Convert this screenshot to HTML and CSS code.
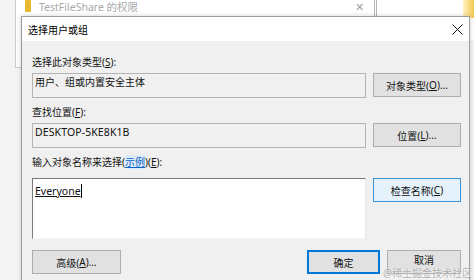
FILE: index.html
```html
<!DOCTYPE html>
<html lang="zh-CN">
<head>
<meta charset="utf-8">
<title>选择用户或组</title>
<link rel="stylesheet" href="styles.css">
</head>
<body>
<div class="desktop">
  <div class="win-right"></div>
  <div class="yellow"></div>
  <div class="behind">
    <div class="behind-title">
      <span class="folder"></span>
      <span class="behind-text">TestFileShare 的权限</span>
      <span class="behind-x">✕</span>
    </div>
  </div>

  <div class="dialog">
    <div class="titlebar">
      <span class="title">选择用户或组</span>
      <svg class="close" width="11" height="11" viewBox="0 0 11 11"><path d="M0.5 0.5 L10.5 10.5 M10.5 0.5 L0.5 10.5" stroke="#111" stroke-width="1"/></svg>
    </div>
    <div class="content">
      <div class="label">选择此对象类型(<u>S</u>):</div>
      <div class="row">
        <div class="box">用户、组或内置安全主体</div>
        <div class="btn">对象类型(<u>O</u>)...</div>
      </div>
      <div class="label l2">查找位置(<u>F</u>):</div>
      <div class="row">
        <div class="box latin">DESKTOP-5KE8K1B</div>
        <div class="btn">位置(<u>L</u>)...</div>
      </div>
      <div class="label l2">输入对象名称来选择(<span class="link">示例</span>)(<u>E</u>):</div>
      <div class="row">
        <div class="textarea"><span class="entry">Everyone</span><span class="caret"></span></div>
        <div class="btn hover">检查名称(<u>C</u>)</div>
      </div>
      <div class="footer">
        <div class="btn adv">高级(<u>A</u>)...</div>
        <div class="actions">
          <div class="btn ok">确定</div>
          <div class="btn cancel">取消</div>
        </div>
      </div>
    </div>
  </div>

  <div class="watermark">@稀土掘金技术社区</div>
</div>
</body>
</html>
```

FILE: styles.css
```css
html, body {
  margin: 0;
  padding: 0;
}
body {
  width: 474px;
  height: 280px;
  overflow: hidden;
  background: #f4f4f4;
  font-family: "Noto Sans", "Noto Sans CJK SC", sans-serif;
  font-size: 10px;
  color: #111;
}
.desktop {
  position: relative;
  width: 474px;
  height: 280px;
  overflow: hidden;
}
.win-right {
  position: absolute;
  left: 377px;
  top: 0;
  width: 97px;
  height: 40px;
  background: #fff;
}
.yellow {
  position: absolute;
  left: 463px;
  top: 0;
  width: 11px;
  height: 18px;
  background: linear-gradient(90deg, #fff3c4, #f2c94c);
}
.behind {
  position: absolute;
  left: 15px;
  top: -14px;
  width: 358px;
  height: 80px;
  background: #fff;
  border: 1px solid #c9c9c9;
  border-right: 3px double #b5b5b5;
}
.behind-title {
  height: 36px;
  display: flex;
  align-items: center;
  padding-left: 9px;
  padding-right: 10px;
}
.folder {
  width: 6px;
  height: 12px;
  margin-top: 2px;
  background: #e8b830;
  border-radius: 1px;
}
.behind-text {
  margin-left: 8px;
  font-size: 10.5px;
  color: #a9a9a9;
  margin-top: 2px;
}
.behind-x {
  margin-left: auto;
  color: #a0a0a0;
  font-size: 11px;
  margin-top: 2px;
}
.dialog {
  position: absolute;
  left: 21px;
  top: 16px;
  width: 447px;
  height: 300px;
  background: #f0f0f0;
  border: 1px solid #9c9c9c;
  box-shadow: 0 0 5px rgba(0, 0, 0, 0.18);
}
.titlebar {
  height: 24px;
  background: #fff;
  display: flex;
  align-items: center;
  justify-content: space-between;
  padding: 0 6px 0 6px;
}
.title {
  font-size: 10px;
  color: #000;
}
.close {
  display: block;
}
.content {
  padding: 13px 8px 0 10px;
}
.label {
  line-height: 16px;
  height: 16px;
  margin-bottom: 3px;
}
.label.l2 {
  margin-top: 6px;
}
.link {
  color: #0a64c8;
  text-decoration: underline;
  background: #dcebf8;
}
.row {
  display: flex;
  gap: 7px;
  align-items: flex-start;
}
.box {
  box-sizing: border-box;
  width: 334px;
  height: 25px;
  border: 1px solid #b4b4b4;
  background: #f0f0f0;
  padding: 0 2px;
  line-height: 16px;
}
.latin {
  font-size: 10.5px;
  letter-spacing: 0.1px;
}
.btn {
  box-sizing: border-box;
  width: 88px;
  height: 24px;
  border: 1px solid #adadad;
  background: #e1e1e1;
  display: flex;
  align-items: center;
  justify-content: center;
  font-size: 10px;
}
.btn.hover {
  background: #e5f1fb;
  border-color: #3c94d8;
}
.textarea {
  box-sizing: border-box;
  width: 334px;
  height: 61px;
  margin-top: 5px;
  background: #fff;
  border-top: 1px solid #7a7a7a;
  border-left: 1px solid #7a7a7a;
  border-right: 1px solid #e6e6e6;
  border-bottom: 1px solid #f4f4f4;
  padding: 4px 2px 0 2px;
  line-height: 16px;
  display: flex;
  align-items: flex-start;
}
.row .btn.hover {
  margin-top: 5px;
}
.entry {
  font-size: 10.5px;
  text-decoration: underline;
}
.caret {
  width: 1px;
  height: 14px;
  margin-top: 1px;
  background: #000;
}
.footer {
  display: flex;
  justify-content: space-between;
  margin-top: 11px;
}
.adv {
  width: 89px;
}
.actions {
  display: flex;
  gap: 7px;
}
.ok {
  width: 73px;
  border-color: #0078d7;
  box-shadow: inset 0 0 0 1px #0078d7;
}
.cancel {
  width: 74px;
  align-items: flex-start;
  padding-top: 3px;
  line-height: 12px;
}
.watermark {
  position: absolute;
  left: 383px;
  top: 268px;
  font-size: 10px;
  line-height: 11px;
  color: rgba(150, 150, 150, 0.75);
  text-shadow: 0 0 2px #fff;
  white-space: nowrap;
}
```
